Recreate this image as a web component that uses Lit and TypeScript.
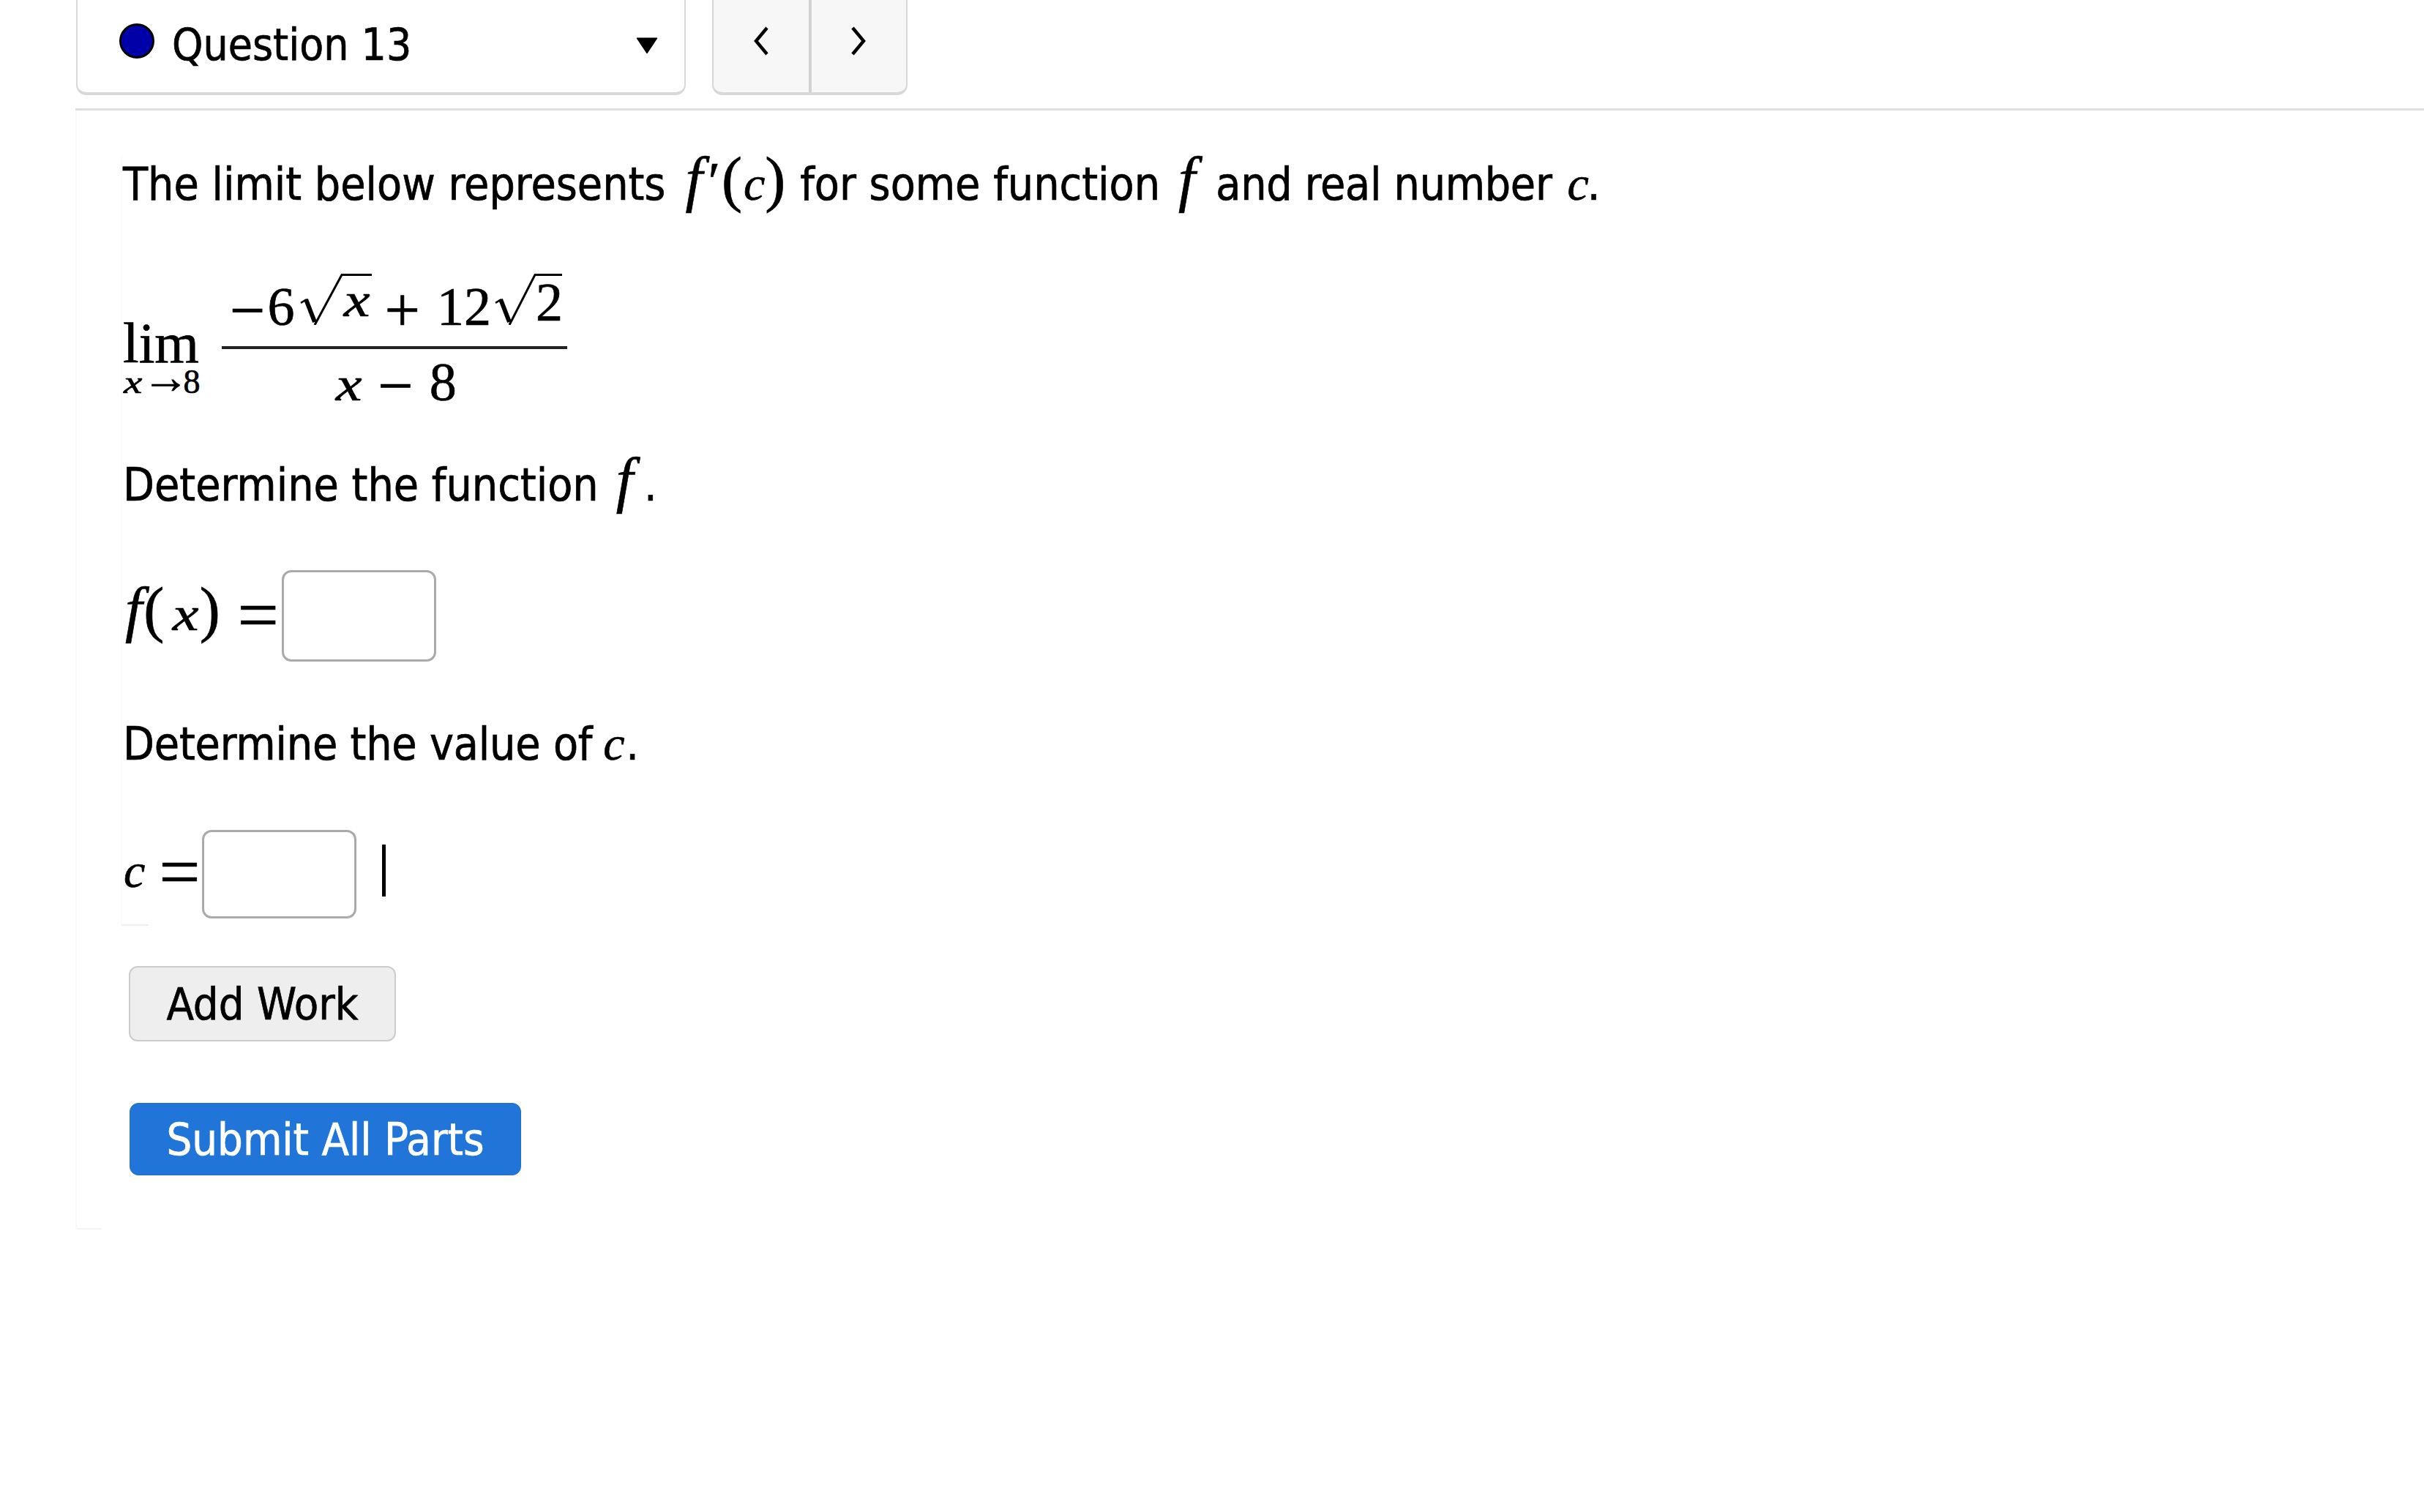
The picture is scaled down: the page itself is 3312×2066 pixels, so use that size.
import { LitElement, html, css, svg } from "lit";
import { customElement } from "lit/decorators.js";

const radical = (h: number, w: number) => svg`
  <svg class="rad" width="${w}" height="${h}" viewBox="0 0 ${w} ${h}" aria-hidden="true">
    <path d="M1 ${h * 0.57} L9 ${h * 0.5}" fill="none" stroke="#000" stroke-width="2.5"/>
    <path d="M8 ${h * 0.5} L20 ${h - 4}" fill="none" stroke="#000" stroke-width="6"/>
    <path d="M20 ${h} L${w - 1} 1.5 L${w} 1.5" fill="none" stroke="#000" stroke-width="3"/>
  </svg>`;

@customElement("app-root")
export class AppRoot extends LitElement {
  static styles = css`
    :host {
      display: block;
      width: 3312px;
      height: 2066px;
      overflow: hidden;
      background: #fff;
      color: #000;
      font-family: "DejaVu Sans Condensed", "DejaVu Sans", sans-serif;
      font-stretch: condensed;
      font-size: 62px;
      -webkit-text-stroke: 0.7px;
    }
    .toolbar { display: flex; gap: 36px; height: 130px; padding-left: 104px; }
    .select {
      width: 833px;
      box-sizing: border-box;
      display: flex;
      align-items: flex-start;
      padding: 21px 36px 0 57px;
      background: #fff;
      border: 2px solid #d8d8d8;
      border-top: 0;
      border-bottom-width: 4px;
      border-radius: 0 0 14px 14px;
    }
    .dot {
      width: 48px;
      height: 48px;
      box-sizing: border-box;
      margin: 11px 24px 0 0;
      border-radius: 50%;
      background: #0000a8;
      border: 3px solid #000;
      flex: none;
    }
    .qname { line-height: 80px; flex: 1; font-size: 60px; }
    .caret { margin-top: 30px; flex: none; }
    .nav {
      display: flex;
      width: 267px;
      box-sizing: border-box;
      background: #f7f7f7;
      border: 2px solid #d8d8d8;
      border-top: 0;
      border-bottom-width: 4px;
      border-radius: 0 0 14px 14px;
    }
    .nav-btn { flex: 1; display: flex; justify-content: center; padding-top: 36px; }
    .nav-btn + .nav-btn { border-left: 4px solid #d2d2d2; }
    .rule { height: 3px; margin: 18px 0 0 103px; background: #ddd; }
    .content {
      position: relative;
      height: 1529px;
      box-sizing: border-box;
      margin-left: 103px;
      padding: 61px 0 0 60px;
      border-left: 2px solid #f9f9f9;
    }
    .content::after {
      content: "";
      position: absolute;
      left: 0;
      bottom: 0;
      width: 34px;
      height: 2px;
      background: #f3f3f3;
    }
    .question {
      position: relative;
      box-sizing: border-box;
      height: 1053px;
      padding-left: 1px;
      border-left: 2px solid #fbfbfb;
    }
    .question::after {
      content: "";
      position: absolute;
      left: 0;
      bottom: 0;
      width: 36px;
      height: 2px;
      background: #eee;
    }
    .line { display: flex; align-items: baseline; height: 80px; line-height: 80px; white-space: pre; }
    .m {
      font-family: "Liberation Serif", serif;
      font-stretch: normal;
      font-size: 74px;
      line-height: 72px;
    }
    .f {
      font-family: "Liberation Serif", serif;
      font-stretch: normal;
      font-style: italic;
      font-size: 84px;
      line-height: 62px;
    }
    .p {
      font-family: "Liberation Serif", serif;
      font-stretch: normal;
      font-size: 84px;
      line-height: 62px;
    }
    .v {
      font-family: "Liberation Serif", serif;
      font-stretch: normal;
      font-style: italic;
      font-size: 66px;
      line-height: 1;
    }
    .x { display: inline-block; margin: 0 4px; transform: scaleX(1.22); }
    .prime { font-family: "Liberation Serif", serif; font-stretch: normal; font-size: 74px; line-height: 62px; }
    .op {
      display: inline-block;
      font-size: 86px;
      line-height: 62px;
      transform: translateY(9px);
    }
    .eqop {
      display: inline-block;
      font-size: 100px;
      line-height: 54px;
      transform: translateY(13px);
    }

    .l1-math { margin-left: 27px; display: flex; align-items: baseline; }
    .l1-prime { margin-left: 8px; }
    .l1-open { margin-left: 2px; }
    .l1-c { margin-left: 2px; }
    .l1-for { margin-left: 20px; }
    .l1-f { margin-left: 25px; }
    .l1-and { margin-left: 28px; letter-spacing: -0.3px; }
    .l1-cc { margin-left: 21px; }
    .l1-dot { margin-left: -2px; }

    .limit { display: flex; align-items: flex-start; margin-top: 82px; }
    .limcol { width: 104px; margin-top: 59px; flex: none; }
    .lim { display: block; text-align: center; font-size: 78px; }
    .sub { display: flex; align-items: baseline; margin-top: 1px; font-size: 46px; line-height: 30px; }
    .sub .v { font-size: 44px; line-height: 30px; }
    .sub .x { transform: scaleX(1.3); }
    .arrow { font-size: 64px; line-height: 20px; margin-left: -1px; }
    .eight { margin-left: -8px; }
    .frac { margin-left: 31px; width: 472px; display: flex; flex-direction: column; }
    .num { display: flex; align-items: baseline; padding-left: 11px; }
    .den { display: flex; align-items: baseline; padding-left: 155px; margin-top: 9px; }
    .bar { height: 4px; margin-top: 18px; background: #222; }
    .sqrt { display: inline-flex; flex-direction: row-reverse; align-items: flex-start; }
    .rad { display: block; flex: none; }
    .body { display: block; border-top: 3px solid #000; text-align: center; }
    .b1 { width: 40px; line-height: 52px; }
    .b2 { width: 36px; line-height: 72px; }
    .g1 { margin-left: 3px; }
    .g2 { margin-left: 7px; }
    .g3 { margin-left: 18px; }
    .g4 { margin-left: 23px; }
    .g5 { margin-left: 5px; }
    .d1 { margin-left: 21px; }
    .d2 { margin-left: 22px; }

    .text2 { margin-top: 65px; }
    .text2 .f { margin-left: 24px; }
    .dot2 { margin-left: 15px; }
    .answer { display: flex; align-items: flex-start; }
    .a1 { margin-top: 76px; }
    .a2 { margin-top: 77px; }
    .expr { display: flex; align-items: baseline; }
    .e1 { margin-top: 22px; }
    .e2 { margin-top: 18px; }
    .fx { margin-left: 3px; }
    .po { margin-left: 2px; }
    .xg { margin-left: 15px; }
    .eq { margin-left: 24px; }
    .cg { margin-left: 1px; }
    .eq2 { margin-left: 19px; }
    .field {
      width: 211px;
      box-sizing: border-box;
      background: #fff;
      border: 3px solid #aaa;
      border-radius: 13px;
      flex: none;
    }
    .f1 { height: 125px; margin-left: 4px; }
    .f2 { height: 121px; margin-left: 2px; }
    .text3 { margin-top: 73px; letter-spacing: -0.2px; }
    .text3 .v { margin-left: 15px; }
    .dot3 { margin-left: 2px; }
    .cursor { width: 5px; height: 71px; margin: 20px 0 0 35px; background: #000; }

    .btn {
      display: block;
      box-sizing: border-box;
      font: inherit;
      font-size: 61px;
      font-stretch: condensed;
      padding: 0;
      text-align: center;
    }
    .work {
      width: 365px;
      height: 103px;
      margin: 55px 0 0 11px;
      background: #eee;
      color: #000;
      border: 2px solid #ccc;
      border-radius: 12px;
    }
    .submit {
      width: 535px;
      height: 99px;
      margin: 84px 0 0 12px;
      background: #2175d9;
      color: #fff;
      border: 1px solid #2a6fc4;
      border-radius: 12px;
    }
  `;

  render() {
    return html`
      <div class="toolbar">
        <div class="select">
          <span class="dot"></span>
          <span class="qname">Question 13</span>
          <svg class="caret" width="30" height="22" viewBox="0 0 30 22" aria-hidden="true"><path d="M1 1 H29 L15 22 Z" fill="#000" stroke="#000" stroke-linejoin="round"/></svg>
        </div>
        <div class="nav">
          <div class="nav-btn">
            <svg width="22" height="40" viewBox="0 0 22 40" aria-hidden="true"><path d="M19 2 L4 20 L19 38" fill="none" stroke="#000" stroke-width="4.5"/></svg>
          </div>
          <div class="nav-btn">
            <svg width="22" height="40" viewBox="0 0 22 40" aria-hidden="true"><path d="M3 2 L18 20 L3 38" fill="none" stroke="#000" stroke-width="4.5"/></svg>
          </div>
        </div>
      </div>
      <div class="rule"></div>
      <div class="content">
        <div class="question">
          <div class="line">
            <span>The limit below represents</span>
            <span class="l1-math"><span class="f">f</span><span class="prime l1-prime">′</span><span class="p l1-open">(</span><span class="v l1-c">c</span><span class="p">)</span></span>
            <span class="l1-for">for some function</span>
            <span class="f l1-f">f</span>
            <span class="l1-and">and real number</span>
            <span class="v l1-cc">c</span><span class="l1-dot">.</span>
          </div>

          <div class="limit">
            <div class="limcol">
              <span class="m lim">lim</span>
              <span class="m sub"><span class="v x">x</span><span class="arrow">→</span><span class="eight">8</span></span>
            </div>
            <div class="frac">
              <div class="num m">
                <span class="op">−</span>
                <span class="g1">6</span>
                <span class="sqrt g2"><span class="body b1"><span class="v x">x</span></span>${radical(70, 58)}</span>
                <span class="op g3">+</span>
                <span class="g4">12</span>
                <span class="sqrt g5"><span class="body b2">2</span>${radical(70, 56)}</span>
              </div>
              <div class="bar"></div>
              <div class="den m">
                <span class="v x">x</span>
                <span class="op d1">−</span>
                <span class="d2">8</span>
              </div>
            </div>
          </div>

          <div class="line text2">
            <span>Determine the function</span><span class="f">f</span><span class="dot2">.</span>
          </div>

          <div class="answer a1">
            <div class="expr e1 m">
              <span class="f fx">f</span><span class="p po">(</span><span class="v x xg">x</span><span class="p">)</span>
              <span class="eqop eq">=</span>
            </div>
            <div class="field f1"></div>
          </div>

          <div class="line text3">
            <span>Determine the value of</span><span class="v">c</span><span class="dot3">.</span>
          </div>

          <div class="answer a2">
            <div class="expr e2 m">
              <span class="v cg">c</span>
              <span class="eqop eq2">=</span>
            </div>
            <div class="field f2"></div>
            <div class="cursor"></div>
          </div>
        </div>
        <button class="btn work">Add Work</button>
        <button class="btn submit">Submit All Parts</button>
      </div>
    `;
  }
}
